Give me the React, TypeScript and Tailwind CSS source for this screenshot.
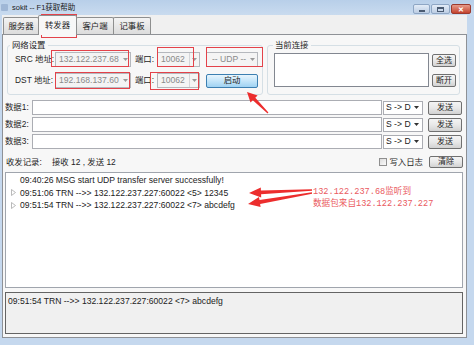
import React from "react";

function Btn({ children, className = "" }: { children?: React.ReactNode; className?: string }) {
  return (
    <div
      className={`flex items-center justify-center rounded-[2px] border border-[#707070] bg-linear-to-b from-[#f4f4f4] via-[#e8e8e8] to-[#d2d2d2] text-[8px] leading-none text-[#1e1e1e] ${className}`}
    >
      {children}
    </div>
  );
}

function Arrow({ color = "#6d6d6d" }: { color?: string }) {
  return (
    <svg width="5" height="3" viewBox="0 0 5 3" className="shrink-0">
      <polygon points="0,0 5,0 2.5,3" fill={color} />
    </svg>
  );
}

function DisCombo({ text, className = "", split = false }: { text: string; className?: string; split?: boolean }) {
  return (
    <div
      className={`flex h-[15px] items-center border border-[#b5b8bd] bg-[#f4f4f4] pl-[3px] text-[8.6px] leading-none text-[#8a8a8a] ${className}`}
    >
      <span className="flex-1 truncate">{text}</span>
      {split ? (
        <div className="flex h-full w-[10px] items-center justify-center border-l border-[#d4d6d9]">
          <Arrow color="#9a9a9a" />
        </div>
      ) : (
        <div className="flex h-full w-[10px] items-center justify-center">
          <Arrow color="#9a9a9a" />
        </div>
      )}
    </div>
  );
}

function Tri() {
  return (
    <svg width="5" height="7" viewBox="0 0 5 7" className="shrink-0">
      <polygon points="0.5,0.5 4.5,3.5 0.5,6.5" fill="none" stroke="#a8a8a8" strokeWidth="0.8" />
    </svg>
  );
}

function DataRow({ label }: { label: string }) {
  return (
    <div className="flex h-[15px] items-center">
      <span className="w-[27px] text-[8.4px] leading-none">{label}</span>
      <div className="h-[15px] w-[350px] border border-[#abadb3] bg-white" />
      <div className="ml-[1px] flex h-[14px] w-[40px] items-center border border-[#abadb3] bg-white pl-[2px] pr-[3px] text-[8.6px] leading-none text-[#222]">
        <span className="flex-1">S -&gt; D</span>
        <Arrow color="#333" />
      </div>
      <Btn className="ml-[5px] h-[14px] w-[34px]">发送</Btn>
    </div>
  );
}

export default function App() {
  return (
    <div className="relative h-[345px] w-[474px] overflow-hidden bg-[#c5d8ee] font-['Liberation_Sans','Noto_Sans_CJK_SC',sans-serif] text-[#1e1e1e]">
      {/* title bar */}
      <div className="flex h-[15px] items-start bg-linear-to-b from-[#b8cfe9] to-[#c9dbef]">
        <div className="ml-[1px] mt-[4px] h-[7px] w-[7px] rounded-[1px] bg-[#9fb7d6]" />
        <span className="ml-[4px] mt-[3px] text-[7.5px] leading-[9px] text-[#1b1b1b]">sokit -- F1获取帮助</span>
        <div className="ml-auto mr-[3px] mt-[4px] flex gap-[1px]">
          <div className="flex h-[10px] w-[17px] items-center justify-center rounded-[2px] border border-[#8ea6c4] bg-linear-to-b from-[#e3ecf7] to-[#bccde3]">
            <div className="mt-[3px] h-[2px] w-[6px] bg-[#4a5b72]" />
          </div>
          <div className="flex h-[10px] w-[19px] items-center justify-center rounded-[2px] border border-[#8ea6c4] bg-linear-to-b from-[#e3ecf7] to-[#bccde3]">
            <div className="h-[5px] w-[7px] border border-t-2 border-[#4a5b72]" />
          </div>
          <div className="flex h-[10px] w-[20px] items-center justify-center rounded-[2px] border border-[#9b3a2e] bg-linear-to-b from-[#e59a8a] to-[#c4412c]">
            <span className="text-[7px] font-bold leading-none text-white">✕</span>
          </div>
        </div>
      </div>

      {/* client */}
      <div className="flex h-[323px]">
        <div className="w-[2px]" />
        <div className="flex w-[465px] flex-col bg-[#f0f0f0]">
          {/* tabs */}
          <div className="flex h-[19px] items-end pl-[1px]">
            <div className="flex h-[17px] w-[36px] items-center justify-center rounded-t-[2px] border border-b-0 border-[#8e8f8f] bg-linear-to-b from-[#f3f3f3] to-[#dcdcdc] text-[8.4px] leading-none">
              服务器
            </div>
            <div className="relative z-10 -mb-px -ml-[1px] flex h-[20px] w-[39px] items-center justify-center rounded-t-[2px] border border-b-0 border-[#8e8f8f] bg-[#f7f7f7] text-[8.4px] leading-none">
              转发器
            </div>
            <div className="-ml-[1px] flex h-[17px] w-[38px] items-center justify-center rounded-t-[2px] border border-b-0 border-[#8e8f8f] bg-linear-to-b from-[#f3f3f3] to-[#dcdcdc] text-[8.4px] leading-none">
              客户端
            </div>
            <div className="-ml-[1px] flex h-[17px] w-[38px] items-center justify-center rounded-t-[2px] border border-b-0 border-[#8e8f8f] bg-linear-to-b from-[#f3f3f3] to-[#dcdcdc] text-[8.4px] leading-none">
              记事板
            </div>
          </div>

          {/* panel */}
          <div className="flex flex-1 flex-col border border-[#8e9196] bg-[#f7f7f7]">
            {/* group boxes */}
            <div className="ml-[4px] mt-[4px] flex">
              <fieldset className="h-[56px] w-[256px] rounded-[3px] border border-[#d5dfe5] px-0">
                <legend className="ml-[2px] px-[2px] text-[8.4px] leading-[12px]">网络设置</legend>
                <div className="flex flex-col gap-[6px] pl-[7px] pt-[1px]">
                  <div className="flex h-[15px] items-center">
                    <span className="w-[40px] text-[8.4px] leading-none">SRC 地址:</span>
                    <DisCombo text="132.122.237.68" className="w-[76px]" />
                    <span className="ml-[4px] w-[22px] text-[8.4px] leading-none">端口:</span>
                    <DisCombo text="10062" className="w-[43px]" split />
                    <DisCombo text="-- UDP --" className="ml-[6px] w-[52px] pl-[5px]" />
                  </div>
                  <div className="flex h-[15px] items-center">
                    <span className="w-[40px] text-[8.4px] leading-none">DST 地址:</span>
                    <DisCombo text="192.168.137.60" className="w-[76px]" />
                    <span className="ml-[4px] w-[22px] text-[8.4px] leading-none">端口:</span>
                    <DisCombo text="10062" className="w-[43px]" split />
                    <div className="ml-[6px] flex h-[14px] w-[52px] items-center justify-center rounded-[2px] border border-[#3c7fb1] bg-linear-to-b from-[#e8f5fd] via-[#c4e5f9] to-[#9fd2f2] text-[8.4px] leading-none">
                      启动
                    </div>
                  </div>
                </div>
              </fieldset>
              <fieldset className="ml-[4px] h-[56px] w-[193px] rounded-[3px] border border-[#d5dfe5] px-0">
                <legend className="ml-[5px] px-[2px] text-[8.4px] leading-[12px]">当前连接</legend>
                <div className="flex pl-[6px] pt-[2px]">
                  <div className="h-[34px] w-[155px] border border-[#828790] bg-white" />
                  <div className="ml-[3px] flex flex-col gap-[7px] pt-[1px]">
                    <Btn className="h-[13px] w-[24px]">全选</Btn>
                    <Btn className="h-[13px] w-[24px]">断开</Btn>
                  </div>
                </div>
              </fieldset>
            </div>

            {/* data rows */}
            <div className="mt-[5px] flex flex-col gap-[2px] pl-[2px]">
              <DataRow label="数据1:" />
              <DataRow label="数据2:" />
              <DataRow label="数据3:" />
            </div>

            {/* record row */}
            <div className="mt-[6px] flex h-[14px] items-center pl-[3px]">
              <span className="w-[46px] text-[8.4px] leading-none">收发记录:</span>
              <span className="text-[8.4px] leading-none">接收 12 , 发送 12</span>
              <div className="ml-auto flex items-center">
                <div className="h-[8px] w-[8px] border border-[#8f8f8f] bg-linear-to-br from-[#dcdcdc] to-[#fafafa]" />
                <span className="ml-[3px] text-[8.4px] leading-none">写入日志</span>
                <Btn className="ml-[6px] mr-[3px] h-[12px] w-[34px]">清除</Btn>
              </div>
            </div>

            {/* log */}
            <div className="ml-[2px] mt-[3px] h-[116px] w-[458px] border border-[#a0a5ad] bg-white pt-[1px] text-[8.6px] leading-[12.5px] text-[#222]">
              <div className="flex items-center pl-[14px]">09:40:26 MSG start UDP transfer server successfully!</div>
              <div className="flex items-center pl-[5px]">
                <Tri />
                <span className="ml-[4px]">09:51:06 TRN --&gt;&gt; 132.122.237.227:60022 &lt;5&gt; 12345</span>
              </div>
              <div className="flex items-center pl-[5px]">
                <Tri />
                <span className="ml-[4px]">09:51:54 TRN --&gt;&gt; 132.122.237.227:60022 &lt;7&gt; abcdefg</span>
              </div>
            </div>

            {/* status */}
            <div className="ml-[2px] mt-[4px] h-[42px] w-[458px] border border-[#646464] bg-[#f0f0f0] pl-[2px] pt-[2px] text-[8.6px] leading-[12px] text-[#222]">
              09:51:54 TRN --&gt;&gt; 132.122.237.227:60022 &lt;7&gt; abcdefg
            </div>
          </div>
        </div>
        <div className="w-[7px]" />
      </div>

      {/* annotations */}
      <div className="pointer-events-none absolute left-[41px] top-[14px] h-[24px] w-[36px] border border-[#e3424a]" />
      <div className="pointer-events-none absolute left-[51px] top-[50px] h-[17px] w-[78px] border border-[#e3424a]" />
      <div className="pointer-events-none absolute left-[157px] top-[47px] h-[20px] w-[37px] border border-[#e3424a]" />
      <div className="pointer-events-none absolute left-[206px] top-[47px] h-[20px] w-[57px] border border-[#e3424a]" />
      <div className="pointer-events-none absolute left-[55px] top-[72px] h-[17px] w-[75px] border border-[#e3424a]" />
      <div className="pointer-events-none absolute left-[150px] top-[72px] h-[18px] w-[49px] border border-[#e3424a]" />

      <svg className="pointer-events-none absolute left-0 top-0" width="474" height="345" viewBox="0 0 474 345">
        <polygon points="247,92 257.6,95.5 255.3,97.8 268.4,112.6 267.6,113.4 252.8,100.3 250.5,102.6" fill="#ec2d2d" />
        <polygon points="249,193 261.2,197.4 261.1,194.3 312,190.8 312,189.2 260.9,190.5 260.8,187.4" fill="#ec2d2d" />
        <polygon points="248,204 260.6,206.9 260.1,203.9 312.1,193.8 311.9,192.2 259.5,200.1 259,197.1" fill="#ec2d2d" />
      </svg>
      <div className="pointer-events-none absolute left-[313px] top-[186px] font-['Liberation_Mono','Noto_Sans_CJK_SC',monospace] text-[8.6px] leading-[12px] text-[#ea5a60]">
        <div>132.122.237.68监听到</div>
        <div>数据包来自132.122.237.227</div>
      </div>
    </div>
  );
}
